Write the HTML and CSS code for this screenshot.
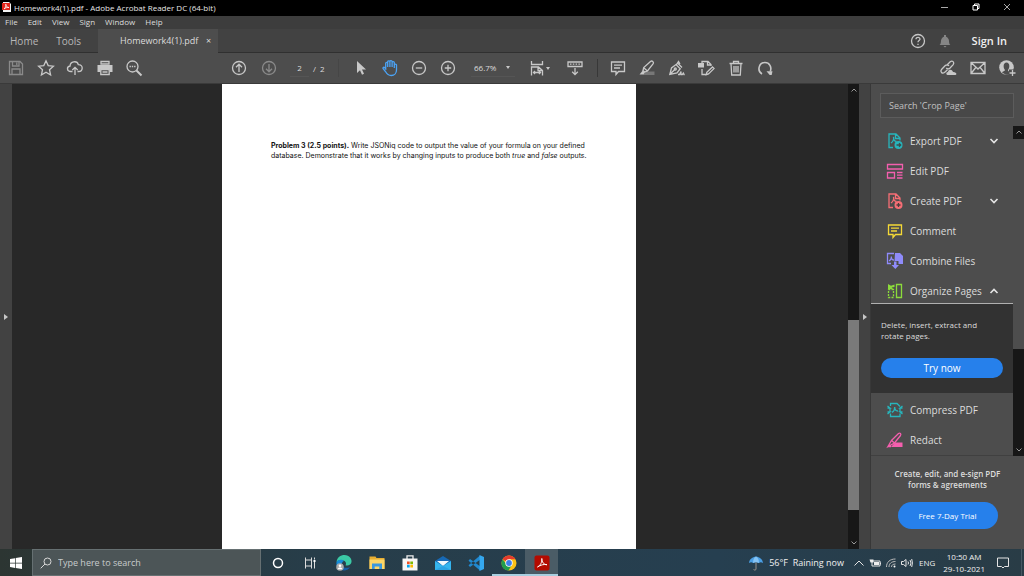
FILE: index.html
```html
<!DOCTYPE html>
<html lang="en">
<head>
  <meta charset="UTF-8">
  <title>Homework4(1).pdf - Adobe Acrobat Reader DC (64-bit)</title>
  <link rel="stylesheet" href="styles.css">
</head>
<body>

<header class="titlebar">
  <svg class="app-icon" viewBox="0 0 10 10"><path fill="#f4f4f4" d="M1 0h6l2 2v8H1z"/><rect y="1" width="8" height="7" fill="#e2261c"/><path d="M2 7c1.500-1 2-3 1.800-4.800C4.200 5 5.500 5.500 7 5.500 5 5.200 3 6 2 7z" fill="none" stroke="#fff" stroke-width=".8"/></svg>
  <span class="title">Homework4(1).pdf - Adobe Acrobat Reader DC (64-bit)</span>
  <div class="window-btns">
    <button aria-label="Minimize"><svg viewBox="0 0 8 8"><path d="M0 4.500h7"/></svg></button>
    <button aria-label="Restore"><svg viewBox="0 0 8 8" class="bright"><path d="M1 2.500h4.500v4.500H1zM2.500 2V1H7v4.500H6"/></svg></button>
    <button aria-label="Close"><svg viewBox="0 0 8 8"><path d="M1 1l6 6M7 1L1 7"/></svg></button>
  </div>
</header>

<nav class="menubar">
  <a href="#file">File</a>
  <a href="#edit">Edit</a>
  <a href="#view">View</a>
  <a href="#sign">Sign</a>
  <a href="#window">Window</a>
  <a href="#help">Help</a>
</nav>

<div class="tabbar">
  <a class="tab-home" href="#home">Home</a>
  <a class="tab-tools" href="#tools">Tools</a>
  <div class="tab-doc">
    <span>Homework4(1).pdf</span>
    <button aria-label="Close tab">×</button>
  </div>
  <div class="account">
    <button aria-label="Help"><svg class="icon" viewBox="0 0 18 18"><circle cx="9" cy="9" r="6.500"/><path d="M7 7.300c0-2.700 4.200-2.500 4 0C10.900 8.600 9 8.600 9 10.300M9 11.800v1.200"/></svg></button>
    <button aria-label="Notifications"><svg class="icon" viewBox="0 0 18 18"><path d="M3.500 13c2-1.500 1-4 2-6 .6-1.400 1.500-2 2.500-2.300V3h2v1.700c1 .3 1.900.9 2.500 2.300 1 2 0 4.500 2 6zM7.500 14h3l-1.500 1.500z" fill="#858585" stroke="none"/></svg></button>
    <a href="#signin">Sign In</a>
  </div>
</div>

<div class="toolbar">
  <div class="tools tools-file">
    <button aria-label="Save" class="dim"><svg class="icon" viewBox="0 0 18 18"><path d="M2.500 2.500h10.500l2.500 2.500v10.500h-13zM5.500 2.500v4.500h6.500V2.500M9.800 3.500v2.500M5 15.500V10h8v5.500"/></svg></button>
    <button aria-label="Star"><svg class="icon" viewBox="0 0 18 18"><path d="M9 1.800l2.200 4.800 5.200.6-3.900 3.500 1.100 5.300L9 13.300 4.400 16l1.100-5.300-3.900-3.500 5.200-.6z"/></svg></button>
    <button aria-label="Upload"><svg class="icon" viewBox="0 0 18 18"><path d="M6.500 12.500H5c-4.500 0-4.600-5-.9-5.500C4 2.500 11 1 12.300 5.600c5.200-.2 5.200 6.900 0 6.900h-.8M9 16V8.500M6.300 11L9 8.300l2.700 2.700"/></svg></button>
    <button aria-label="Print"><svg class="icon" viewBox="0 0 18 18"><path d="M5 2.500h8V5H5z"/><path d="M1.500 6h15v7h-3v-2.500h-9V13h-3z" fill="#c8c8c8" stroke="none"/><path d="M4.800 10.500h8.400v5H4.800zM6.500 13h5"/></svg></button>
    <button aria-label="Find"><svg class="icon" viewBox="0 0 18 18"><circle cx="7.500" cy="7.500" r="5.500"/><path d="M11.500 11.500l5 5" stroke-width="2"/><path d="M4.500 7.500h6" stroke-dasharray="1.400 .9"/></svg></button>
  </div>
  <div class="tools tools-page">
    <button aria-label="Previous page"><svg class="icon" viewBox="0 0 18 18"><circle cx="9" cy="9" r="6.500"/><path d="M9 13V5.500M6 8.200l3-3 3 3"/></svg></button>
    <button aria-label="Next page" class="dim"><svg class="icon" viewBox="0 0 18 18"><circle cx="9" cy="9" r="6.500"/><path d="M9 5v7.500M6 9.800l3 3 3-3"/></svg></button>
  </div>
  <input class="page-no" type="text" value="2" aria-label="Page number">
  <span class="page-total">/&nbsp; 2</span>
  <div class="sep sep-first"></div>
  <div class="tools tools-view">
    <button aria-label="Select"><svg class="icon" viewBox="0 0 18 18"><path d="M5 2v12l3-2.700 2 4.400 2-.9-2-4.200h4z" fill="#c8c8c8" stroke="none"/></svg></button>
    <button aria-label="Hand"><svg class="icon hand" viewBox="0 0 18 18"><path d="M4.700 10.500V4.300c0-1.300 2-1.300 2 0V8M6.700 8V2.800c0-1.300 2.200-1.300 2.200 0V8M8.900 8V2.500c0-1.300 2.200-1.300 2.200 0V8M11.100 8V3.500c0-1.300 2.200-1.300 2.200 0V9M13.300 9V6c0-1.300 2.200-1.300 2.200 0v5c0 3-2 5.500-5.300 5.500-3.200 0-4.500-1.700-5.500-3.700L2 9.500c-.3-1.200 1-1.700 1.700-.8l1.500 2"/></svg></button>
    <button aria-label="Zoom out"><svg class="icon" viewBox="0 0 18 18"><circle cx="9" cy="9" r="6.500"/><path d="M5.800 9h6.400"/></svg></button>
    <button aria-label="Zoom in"><svg class="icon" viewBox="0 0 18 18"><circle cx="9" cy="9" r="6.500"/><path d="M5.800 9h6.400M9 5.800v6.400"/></svg></button>
  </div>
  <div class="zoom">
    <select aria-label="Zoom level"><option>66.7%</option></select>
    <span class="caret"></span>
  </div>
  <div class="tools tools-fit">
    <button aria-label="Fit width" class="has-caret"><svg class="icon" viewBox="0 0 18 18"><path d="M3.500 2v3.500h11V2M3.500 16.500V8h7l4 3.500v5M10 8v3.500h4M5.500 13.500h7M7 12l-1.500 1.500L7 15M11 12l1.500 1.500L11 15"/></svg><span class="caret"></span></button>
    <button aria-label="Scroll mode"><svg class="icon" viewBox="0 0 18 18"><path d="M2 3h14v4.500H2z"/><path d="M4 5.200h10" stroke-dasharray="1.500 1.300"/><path d="M9 9v6.500M6.200 12.800L9 15.600l2.800-2.800"/></svg></button>
  </div>
  <div class="sep"></div>
  <div class="tools tools-edit">
    <button aria-label="Comment"><svg class="icon" viewBox="0 0 18 18"><path d="M2.500 3h13v9.500H9.500L7 15.500v-3H2.500zM5 6.200h8M5 9h6"/></svg></button>
    <button aria-label="Highlight"><svg class="icon" viewBox="0 0 18 18"><path d="M7 12.500h9.500v3.500H5z" fill="#777" stroke="none"/><path d="M12.500 2.500c1.500-1.300 3.700.5 2.700 2.200L9.500 12l-3 1-1.500-1.500.7-2.900zM5.700 8.700l3.700 3.300"/><path d="M4.800 11.500L1.500 15.500h4l1.300-2.300z" fill="#c8c8c8" stroke="none"/></svg></button>
    <button aria-label="Sign"><svg class="icon" viewBox="0 0 18 18"><path d="M1.800 15.500L3.500 9 8 5.500l4.200 4.200L9 14zM1.800 15.500l5-5M9.500 4l4.500 4.500M8.500 5.500l2-3L12 5M10 15.500h1.500l1.500-3v3h1.300l1-1.500.7 1.500h.7"/><circle cx="7.300" cy="10" r="1"/></svg></button>
    <button aria-label="Edit"><svg class="icon" viewBox="0 0 18 18"><path d="M5 8V2.500h6l3 3V7M5 10v5.500h4M10.500 3v3H14M15.500 8l1.500 1.600-5.500 5.300-2.200.8.5-2.300z"/><path d="M1 4h6v4.500H1z" fill="#c8c8c8" stroke="none"/></svg></button>
    <button aria-label="Delete"><svg class="icon" viewBox="0 0 18 18"><path d="M2.500 4.500h13M6.500 4.500v-2h5v2M4 4.500l.7 11.500h8.600L14 4.500M7 7v6.500M9 7v6.500M11 7v6.500"/></svg></button>
    <button aria-label="Rotate"><svg class="icon" viewBox="0 0 18 18"><path d="M6 15C.8 12 2.700 3.500 9 3.500c4.500 0 7 4.500 5.300 9" stroke-width="1.600"/><path d="M10.500 12.300h6l-.8 3.700h-2z" fill="#c8c8c8" stroke="none"/></svg></button>
  </div>
  <div class="tools tools-share">
    <button aria-label="Share link"><svg class="icon" viewBox="0 0 18 18"><path d="M7.500 6.500l3.700-3.800c2.200-1.700 4.600.6 3 2.900L10.800 9.300c-1 1-2.700.8-3.500-.3M10 7c-1-1.500-2.700-1.500-3.700-.5L2.500 10.500c-1.700 2.200.7 4.600 3 3L8.500 10.800"/><path d="M8.500 16c-1.700-.5-1.500-2.900.5-3 .5-2.700 4-3 5 0 3-.2 4.500 2.500 2.500 3z" fill="#c8c8c8" stroke="none"/></svg></button>
    <button aria-label="Mail"><svg class="icon" viewBox="0 0 18 18"><path d="M2 3.500h14v11H2zM2 3.500L9 10l7-6.500M2 14.500l4.800-6M16 14.500l-4.800-6"/></svg></button>
    <button aria-label="Profile"><svg class="icon" viewBox="0 0 18 18"><circle cx="8.500" cy="8.500" r="7.300" fill="#c8c8c8" stroke="none"/><path d="M4 13.500c.5-1.200 3-1.200 3-2.500C5 9 5 3.500 8.500 3.500s3.500 5.500 1.500 7.500c0 1 .5 1.300 1 1.500v3.300H8z" fill="#4d4d4d" stroke="none"/><path d="M11 10.500h7v7h-7z" fill="#4d4d4d" stroke="none"/><path d="M14.500 11v6M11.500 14h6"/></svg></button>
  </div>
</div>

<main>
  <button class="edge edge-left" aria-label="Show navigation pane"><span class="arrow"></span></button>
  <section class="viewer">
    <article class="page">
      <p><b>Problem 3 (2.5 points).</b> Write JSONiq code to output the value of your formula on your defined<br>database. Demonstrate that it works by changing inputs to produce both <i>true</i> and <i>false</i> outputs.</p>
    </article>
  </section>
  <div class="scrollbar doc-scroll">
    <svg viewBox="0 0 6 4"><path d="M.500 3.500L3 1l2.500 2.500"/></svg>
    <div class="track"><div class="thumb"></div></div>
    <svg viewBox="0 0 6 4"><path d="M.500.500L3 3 5.500.500"/></svg>
  </div>
  <button class="edge edge-right" aria-label="Hide tools pane"><span class="arrow"></span></button>

  <aside>
    <input class="search" type="text" placeholder="Search 'Crop Page'" aria-label="Search tools">
    <div class="tool-area">
      <div class="tool-list">
        <a class="tool" href="#export">
          <svg class="icon teal" viewBox="0 0 18 18"><path d="M7 15.500H3V2h7l4 4v2.500M9.500 2v4.500H14M5 11c2-1.500 3-4 2.500-6 0 3 1.500 4.500 3 4.500"/><circle cx="12.500" cy="13" r="4" fill="#27b5bc" stroke="none"/><path d="M10.500 13h4M13 11.300l1.700 1.700-1.700 1.700" stroke="#3d4d4d"/></svg>
          <span>Export PDF</span><svg class="chev" viewBox="0 0 10 6"><path d="M1.500 1L5 4.500 8.500 1"/></svg></a>
        <a class="tool" href="#editpdf">
          <svg class="icon pink" viewBox="0 0 18 18"><path d="M1.500 2.500h15V7h-15zM1.500 10.500h7v5.500h-7zM11 10.500h5.500M11 13.200h5.500M11 16h5.500"/></svg>
          <span>Edit PDF</span></a>
        <a class="tool" href="#create">
          <svg class="icon coral" viewBox="0 0 18 18"><path d="M7 15.500H3V2h7l4 4v2.500M9.500 2v4.500H14M5 11c2-1.500 3-4 2.500-6 0 3 1.500 4.500 3 4.500"/><circle cx="12.500" cy="13" r="4" fill="#f66e75" stroke="none"/><path d="M10.500 13h4M12.500 11v4" stroke="#4d3d3d"/></svg>
          <span>Create PDF</span><svg class="chev" viewBox="0 0 10 6"><path d="M1.500 1L5 4.500 8.500 1"/></svg></a>
        <a class="tool" href="#comment">
          <svg class="icon yellow" viewBox="0 0 18 18"><path d="M2.500 3h13v9.500H9.500L7 15.500v-3H2.500zM5 6.200h8M5 9h6"/></svg>
          <span>Comment</span></a>
        <a class="tool" href="#combine">
          <svg class="icon violet" viewBox="0 0 18 18"><path d="M5 11.500H1.500v-10H8M3 9c2-1 2.500-3 2.300-4.500 0 2 1.200 3.500 2.700 3.500"/><path d="M9 1h5l3 3v8h-4.500V9H8.500z" fill="#8f8bfa" stroke="none"/><path d="M8 9.500h2.500v3.500h2.500L9.300 17l-3.800-4H8z" fill="#8f8bfa" stroke="none"/></svg>
          <span>Combine Files</span></a>
        <a class="tool" href="#organize">
          <svg class="icon green" viewBox="0 0 18 18"><path d="M10.500 2.500h5v13h-5z"/><path d="M7.500 7.500H2.500v8h5z" stroke-dasharray="2 1.200"/><path d="M2 2v5h5L5.700 5.500l2.800-.5V2.500L5 3.800z" fill="#8cdb3b" stroke="none"/></svg>
          <span>Organize Pages</span><svg class="chev" viewBox="0 0 10 6"><path d="M1.500 5L5 1.500 8.500 5"/></svg></a>
        <div class="tool-detail">
          <p>Delete, insert, extract and<br>rotate pages.</p>
          <button class="blue-btn">Try now</button>
        </div>
        <a class="tool" href="#compress">
          <svg class="icon teal" viewBox="0 0 18 18"><path d="M4.500 5V2.500h6.500l3 3M4.500 12.500v3h9.500v-3M1.500 5l2.500 2H1.500M1.500 13l2.500-2H1.500M16.500 5L14 7h2.500M16.500 13L14 11h2.500M4 7v4M14 7v4M6 11.500C8 10 9 8 8.700 6c0 2.500 1.500 4 3.300 4"/></svg>
          <span>Compress PDF</span></a>
        <a class="tool" href="#redact">
          <svg class="icon pink" viewBox="0 0 18 18"><path d="M9 11.500h7.500v4.500H5z" fill="#f45fae" stroke="none"/><path d="M12.500 2.500c1.500-1 3 .5 2 2L8.500 12 2 15.500l3.500-6zM5.500 9.500l3 2.500M2 15.500h3"/></svg>
          <span>Redact</span></a>
      </div>
      <div class="scrollbar tool-scroll">
        <svg viewBox="0 0 6 4"><path d="M.500 3.500L3 1l2.500 2.500"/></svg>
        <div class="track"><div class="thumb"></div></div>
        <svg viewBox="0 0 6 4"><path d="M.500.500L3 3 5.500.500"/></svg>
      </div>
    </div>
    <div class="promo">
      <p>Create, edit, and e-sign PDF<br>forms &amp; agreements</p>
      <button class="blue-btn">Free 7-Day Trial</button>
    </div>
  </aside>
</main>

<footer class="taskbar">
  <button class="start" aria-label="Start"><svg viewBox="0 0 12 12"><path fill="#fff" d="M0 2l5-.8v4.500H0zM5.700 1.100L12 0v5.700H5.700zM0 6.400h5v4.500L0 10.100zM5.700 6.400H12V12l-6.300-1z"/></svg></button>
  <label class="task-search">
    <svg viewBox="0 0 12 12"><circle cx="7.500" cy="4.500" r="3.500"/><path d="M5 7L.700 11.300"/></svg>
    <input type="text" placeholder="Type here to search" aria-label="Type here to search">
  </label>
  <div class="apps">
    <button aria-label="Cortana"><svg viewBox="0 0 18 18"><circle cx="9" cy="9" r="4.500" fill="none" stroke="#fff" stroke-width="1.500"/></svg></button>
    <button aria-label="Task view"><svg viewBox="0 0 18 18"><path d="M3.500 3.500v2.500h6V3.500M3.500 14.500V12h6v2.500M3.500 6v6M9.500 6v6M12.500 3.500v2M12.500 8v6.500" fill="none" stroke="#ddd"/><rect x="11.500" y="6" width="2" height="2" fill="#fff"/></svg></button>
    <button aria-label="Edge"><svg viewBox="0 0 18 18"><path d="M1.500 8C2 3.500 5.500 1 9.500 1c5 0 7.500 4 7 7-.4 2.500-3 4-6 3.200 1-1 .8-4.200-2.500-4.700C5 6 2.500 6.500 1.500 8z" fill="#3bc9a5"/><path d="M1.500 8C3 5.500 7 5 9 7c-3 1-3.500 6 1.500 7.500-3 3.500-10 1-9-6.500z" fill="#168bd8"/><path d="M7 9c-1 3 2 6.200 8 4.300-2.500 3.700-7 3.700-9 2.200z" fill="#1760a8"/><circle cx="5" cy="13" r="3.800" fill="#aaa"/><circle cx="5" cy="11.800" r="1.300" fill="#fff"/><path d="M2.700 15.300c0-2.500 4.600-2.500 4.600 0z" fill="#fff"/></svg></button>
    <button aria-label="File Explorer"><svg viewBox="0 0 18 18"><path d="M1.500 2.500h6l1 1.500h8v11h-15z" fill="#e8ae32"/><path d="M1.500 5.500h15V15h-15z" fill="#fcd667"/><path d="M4 15V9.500h10V15h-2.700v-2.500H6.700V15z" fill="#3b98de"/></svg></button>
    <button aria-label="Microsoft Store"><svg viewBox="0 0 18 18"><path d="M6 5V1.800h6V5" fill="none" stroke="#eee" stroke-width="1.300"/><path d="M1.500 4.500h15v12h-15z" fill="#f6f6f6"/><path d="M6 7.500h2.700v2.700H6z" fill="#f25022"/><path d="M9.300 7.500H12v2.700H9.300z" fill="#7fba00"/><path d="M6 10.800h2.700v2.700H6z" fill="#00a4ef"/><path d="M9.300 10.800H12v2.700H9.300z" fill="#ffb900"/></svg></button>
    <button aria-label="Mail"><svg viewBox="0 0 18 18"><path d="M1 7l8-5 8 5v9H1z" fill="#1769b5"/><path d="M3 7h12L9 12z" fill="#f2f8fc"/><path d="M1 7l8 5 8-5v9H1z" fill="#35b5ee"/><path d="M1 16l8-4 8 4z" fill="#2ba3e4"/></svg></button>
    <button aria-label="Visual Studio Code"><svg viewBox="0 0 18 18"><path d="M1.500 11.300L13 1.500v4.300L3 13zM1.500 6.700L13 16.500v-4.300L3 5z" fill="#2189d1"/><path d="M12.500 1L17 3v12l-4.500 2z" fill="#35a8ef"/></svg></button>
    <button aria-label="Chrome" class="open"><svg viewBox="0 0 18 18"><circle cx="9" cy="9" r="7.500" fill="#fbc116"/><path d="M9 9L2.500 5.300C5.500.300 12.500.300 15.500 5.300H9z" fill="#e33b2e"/><path d="M2.500 5.300C-.500 10.500 3 16.300 8.500 16.500L11.800 11 9 9H5.600z" fill="#229d4e"/><circle cx="9" cy="9" r="3.700" fill="#fff"/><circle cx="9" cy="9" r="2.900" fill="#3e7fea"/></svg></button>
    <button aria-label="Adobe Reader" class="open active"><svg viewBox="0 0 18 18"><rect x="1.500" y="1.500" width="15" height="15" rx="2" fill="#b30b00"/><path d="M4.500 13c2.500-1.200 5-5 4.300-8.500C8.500 8 11 10.700 14 10.700c-3.200-.7-6.500.3-9.500 2.300z" fill="none" stroke="#fff"/></svg></button>
  </div>
  <div class="tray">
    <svg class="umbrella" viewBox="0 0 16 16"><path d="M1 8C1.500 4 4.500 2 8 1.500 11.500 2 14.500 4 15 8c-1.500-1-3-1-4 0-1.500-1-4.500-1-6 0-1-1-2.500-1-4 0z" fill="#4b9fe4"/><path d="M5 8c0-3 1-5.500 3-6.500 2 1 3 3.500 3 6.500-1.500-1-4.500-1-6 0z" fill="#86c4f4"/><path d="M8 7.500V14c0 1.500-2 1.500-2.300.3" fill="none" stroke="#98918a"/></svg>
    <span class="weather">56°F&nbsp; Raining now</span>
    <svg class="tray-icon up" viewBox="0 0 12 12"><path d="M1.500 8.500L6 4l4.500 4.500"/></svg>
    <svg class="tray-icon" viewBox="0 0 12 12"><path d="M3 4h8v5H3zM11.500 5.500v2"/><path d="M5 5h5v3H5zM.500 2.500h4v3h-3z" fill="#eee" stroke="none"/></svg>
    <svg class="tray-icon" viewBox="0 0 12 12"><path d="M1.500 10C1.500 5 5 2 10.500 2M4 10c0-3.500 2.500-5.500 6.500-5.500M6.500 10c0-2 1.500-3 4-3" stroke="#bbb"/><circle cx="9.500" cy="9.500" r="1" fill="#fff" stroke="none"/></svg>
    <svg class="tray-icon" viewBox="0 0 12 12"><path d="M.500 4.500h2L5 2.500v7L2.500 7.500h-2zM7 4.500q1 1.500 0 3M9 3q2 3 0 6M10.700 2q1.500 4 0 8"/></svg>
    <span class="lang">ENG</span>
    <div class="clock">10:50 AM<br>29-10-2021</div>
    <button class="notify" aria-label="Notifications"><svg viewBox="0 0 12 12"><path d="M.500 1h11v8.500H7.500L6 11 4.500 9.500h-4z"/></svg></button>
  </div>
</footer>

</body>
</html>
```
FILE: styles.css
```css
* { box-sizing: border-box; }
body { margin: 0; height: 100vh; display: flex; flex-direction: column; overflow: hidden; background: #282828; color: #dcdcdc; font-family: "Open Sans", "Noto Sans", sans-serif; font-size: 10px; }
a { color: inherit; text-decoration: none; }
p { margin: 0; }
button, input, select { font: inherit; color: inherit; background: none; border: 0; padding: 0; margin: 0; }
button { display: flex; align-items: center; justify-content: center; cursor: pointer; }
svg { display: block; flex: none; }
.icon { width: 18px; height: 18px; fill: none; stroke: #c8c8c8; stroke-width: 1.3; }
.caret { border: 2px solid transparent; border-top: 3px solid #c8c8c8; border-bottom: 0; }

/* window frame */
.titlebar { height: 16px; flex: none; display: flex; align-items: center; padding-bottom: 2px; background: #000; color: #e6e6e6; font-size: 8px; }
.app-icon { width: 10px; height: 10px; margin: 0 2px 0 2px; }
.window-btns { display: flex; margin-left: auto; padding-right: 2px; }
.window-btns button { width: 31px; height: 14px; }
.window-btns svg { width: 8px; height: 8px; fill: none; stroke: #a8a8a8; }
.window-btns .bright { stroke: #fff; }
.menubar { height: 13px; flex: none; display: flex; align-items: center; gap: 10px; padding: 0 0 2px 5px; background: #3d3d3d; font-size: 8px; }

.tabbar { height: 24px; flex: none; display: flex; align-items: center; background: #424242; border-bottom: 1px solid #303030; color: #b8b8b8; }
.tab-home { padding-left: 10px; }
.tab-tools { padding-left: 18px; }
.tab-doc { display: flex; align-items: center; justify-content: space-between; width: 120px; height: 24px; margin-left: 17px; padding: 0 7px 0 22px; background: #4d4d4d; color: #dcdcdc; font-size: 9px; }
.account { display: flex; align-items: center; gap: 9px; margin-left: auto; padding-right: 17px; color: #f0f0f0; font-size: 11px; font-weight: 600; }
.account a { margin-left: 9px; }

/* toolbar */
.toolbar { height: 31px; flex: none; display: flex; align-items: center; padding: 0 8px 0 7px; background: #4d4d4d; border-bottom: 1px solid #3a3a3a; font-size: 8px; }
.tools { display: flex; justify-content: space-between; flex: none; }
.dim { opacity: .5; }
.tools-file { width: 136px; }
.tools-page { width: 48px; margin-left: 87px; }
.page-no { width: 19px; height: 18px; margin-left: 12px; text-align: center; border-bottom: 1px solid #555; }
.page-total { margin-left: 4px; width: 14px; }
.sep { width: 1px; height: 18px; background: #383838; }
.sep-first { margin-left: 11px; background: #464646; }
.tools-view { width: 105px; margin-left: 13px; }
.hand { stroke: #4ba3f5; }
.zoom { display: flex; align-items: center; justify-content: space-between; width: 44px; height: 18px; margin-left: 14px; padding: 0 5px 0 3px; border-bottom: 1px solid #555; }
.zoom select { appearance: none; width: 30px; }
.tools-fit { width: 56px; margin-left: 13px; }
.tools-fit + .sep { margin-left: 13px; }
.tools-edit { width: 165px; margin-left: 11px; }
.tools-share { width: 77px; margin-left: auto; }

/* document */
main { flex: 1; min-height: 0; display: flex; }
.edge { flex: none; background: #424242; }
.edge-left { width: 12px; }
.edge-right { width: 12px; border-right: 1px solid #383838; }
.arrow { border: 3px solid transparent; border-left: 4px solid #c8c8c8; border-right: 0; }
.viewer { flex: 1; display: flex; justify-content: center; padding-right: 2px; background: #282828; }
.page { width: 414px; padding: 57px 0 0 49px; background: #fff; color: #111; font: 7px/10px Inter, "Liberation Sans", sans-serif; white-space: nowrap; }
.scrollbar { display: flex; flex-direction: column; align-items: center; flex: none; width: 11px; background: #171717; padding: 4px 0; }
.scrollbar svg { width: 6px; height: 4px; fill: none; stroke: #999; }
.track { flex: 1; align-self: stretch; display: flex; flex-direction: column; margin: 5px 0; }
.thumb { background: #7a7a7a; }
.doc-scroll .track { justify-content: flex-end; padding-bottom: 26px; }
.doc-scroll .thumb { height: 46%; min-height: 20px; }
.tool-scroll .thumb { height: 69%; background: #4d4d4d; }

/* tools pane */
aside { width: 153px; flex: none; display: flex; flex-direction: column; background: #4d4d4d; }
.search { flex: none; height: 25px; margin: 9px 10px 0 9px; padding: 0 8px; background: #484848; border: 1px solid #5c5c5c; font-size: 9px; }
.search::placeholder { color: #c0c0c0; opacity: 1; }
.tool-area { display: flex; flex: none; margin-top: 8px; }
.tool-list { flex: 1; border-bottom: 1px solid #404040; }
.tool { display: flex; align-items: center; height: 30px; padding: 0 14px 0 15px; }
.tool .icon { margin-right: 6px; }
.tool span { white-space: nowrap; }
.chev { width: 10px; height: 6px; margin-left: auto; fill: none; stroke: #e4e4e4; stroke-width: 1.6; }
.tool .teal { stroke: #27b5bc; }
.tool .pink { stroke: #f45fae; }
.tool .coral { stroke: #f66e75; }
.tool .yellow { stroke: #f5d936; }
.tool .violet { stroke: #8f8bfa; }
.tool .green { stroke: #8cdb3b; }
.tool-detail { height: 90px; padding: 15px 10px 0; margin: -3px 0 2px; background: #323232; border-top: 1px solid #b0b0b0; font-size: 8px; line-height: 11px; }
.blue-btn { background: #2680eb; color: #fff; border-radius: 14px; }
.tool-detail .blue-btn { width: 100%; height: 20px; margin-top: 17px; font-size: 10px; }
.promo { padding-top: 12px; display: flex; flex-direction: column; align-items: center; text-align: center; font-size: 8px; font-weight: 600; line-height: 11px; }
.promo .blue-btn { width: 100px; height: 27px; margin-top: 12px; font-weight: 400; }

/* taskbar */
.taskbar { height: 27px; flex: none; display: flex; background: linear-gradient(90deg, #2c3532, #273d49 30%, #263f50 70%, #293c46); color: #f0f0f0; font-size: 9px; }
.start { width: 32px; }
.start svg { width: 12px; height: 12px; }
.task-search { display: flex; align-items: center; gap: 6px; width: 229px; padding-left: 7px; background: #4c5557; border: 1px solid #667072; }
.task-search svg { width: 12px; height: 12px; fill: none; stroke: #d8d8d8; }
.task-search input { width: 180px; }
.task-search input::placeholder { color: #c8cccd; opacity: 1; }
.apps { display: flex; }
.apps button { width: 33px; border-bottom: 2px solid transparent; border-top: 2px solid transparent; }
.apps svg { width: 18px; height: 18px; }
.apps .open { border-bottom-color: #a8cfe0; }
.apps .active { background: #4a5c66; border-top-color: #4a5c66; }
.tray { display: flex; align-items: center; margin-left: auto; padding-right: 2px; white-space: nowrap; }
.umbrella { width: 16px; height: 16px; margin-right: 5px; }
.weather { margin-right: 9px; }
.tray-icon { width: 12px; height: 12px; margin-right: 4px; fill: none; stroke: #e4e4e4; }
.lang { margin: 0 8px 0 2px; font-size: 8px; }
.clock { text-align: center; font-size: 8px; line-height: 12px; }
.notify { width: 37px; height: 27px; border-right: 1px solid #465863; }
.notify svg { width: 12px; height: 12px; fill: none; stroke: #e4e4e4; }
```
